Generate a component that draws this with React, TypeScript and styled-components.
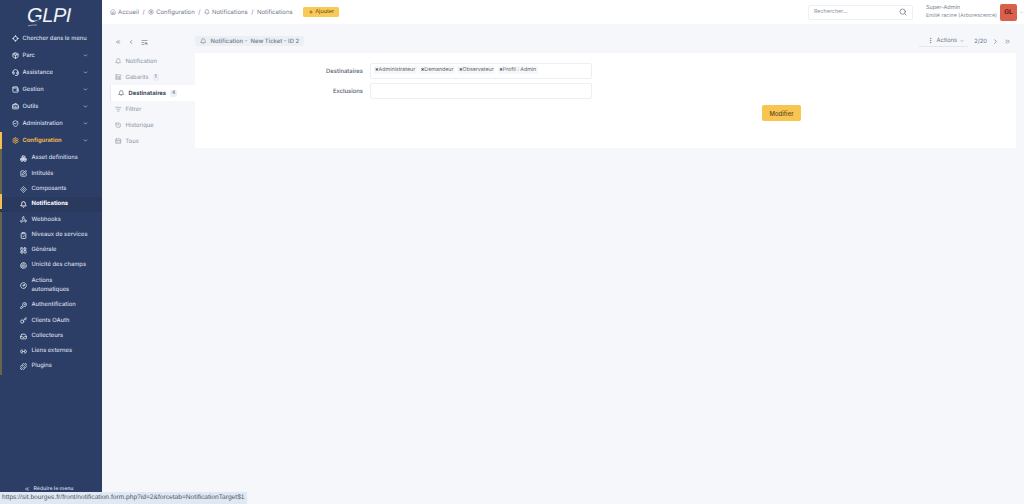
import React from "react";
import styled, { createGlobalStyle } from "styled-components";
import {
  Search, Package, Headset, Wallet, BriefcaseBusiness, ShieldCheck, Settings, ChevronDown,
  ChevronRight, ChevronLeft, ChevronsLeft, ChevronsRight, Bell, LayoutTemplate, ListFilter,
  History, Rows3, House, Plus, EllipsisVertical, Boxes, SquarePen, Component, Webhook,
  ClipboardCheck, LayoutDashboard, Fingerprint, CircleGauge, KeyRound, Key, Inbox, Link2, Puzzle, TextSearch, Locate,
} from "lucide-react";

const GlobalStyle = createGlobalStyle`
  html, body { margin: 0; padding: 0; background: #f5f7fb; }
  body { font-family: Inter, "Liberation Sans", sans-serif; text-rendering: geometricPrecision; }
`;

const Page = styled.div`
  position: relative;
  display: flex;
  width: 1024px;
  height: 504px;
  overflow: hidden;
`;

const Sidebar = styled.aside`
  display: flex;
  flex-direction: column;
  width: 102px;
  flex: none;
  background: #2c3e66;
  color: #d9dfea;
`;

const Logo = styled.div`
  position: relative;
  display: flex;
  align-items: center;
  height: 30px;
  padding: 3px 0 0 27px;
  color: #f1f4f8;
  font-family: "Liberation Sans", sans-serif;
  font-size: 20px;
  font-style: italic;
  letter-spacing: -0.4px;
  box-sizing: border-box;
`;

const LogoSwoosh = styled.svg`
  position: absolute;
  left: 27px;
  top: 17px;
  width: 16px;
  height: 10px;
`;

const Menu = styled.nav`
  display: flex;
  flex-direction: column;
  flex: 1;
`;

const TopItem = styled.div<{ $active?: boolean }>`
  position: relative;
  display: flex;
  align-items: center;
  height: 17px;
  padding: 0 14px 0 12px;
  gap: 3.5px;
  font-size: 5.8px;
  font-weight: ${(p) => (p.$active ? 700 : 500)};
  color: ${(p) => (p.$active ? "#f0b34e" : "#d9dfea")};
  box-sizing: border-box;
  ${(p) =>
    p.$active &&
    `&::before {
      content: "";
      position: absolute;
      left: 0;
      top: 0;
      bottom: 0;
      width: 1.5px;
      background: #f5c04f;
    }`}
`;

const TopLabel = styled.span`
  flex: 1;
  white-space: nowrap;
`;

const SubMenu = styled.div`
  position: relative;
  display: flex;
  flex-direction: column;
  padding-top: 2px;
  &::before {
    content: "";
    position: absolute;
    left: 0;
    top: 0;
    bottom: -1px;
    width: 1.5px;
    background: #66654f;
  }
`;

const SubItem = styled.div<{ $active?: boolean; $tall?: boolean }>`
  position: relative;
  display: flex;
  align-items: center;
  gap: 4.5px;
  min-height: ${(p) => (p.$tall ? "24.5px" : "15.3px")};
  padding-left: 20px;
  font-size: 5.8px;
  line-height: 8.5px;
  font-weight: ${(p) => (p.$active ? 700 : 500)};
  color: ${(p) => (p.$active ? "#ffffff" : "#d5dbe7")};
  background: ${(p) => (p.$active ? "#2a3a5f" : "transparent")};
  ${(p) =>
    p.$active &&
    `&::before {
      content: "";
      position: absolute;
      left: 0;
      top: -3px;
      bottom: 3px;
      width: 1.5px;
      background: #f5c04f;
    }`}
`;

const SubLabel = styled.span`
  max-width: 62px;
`;

const Collapse = styled.div`
  display: flex;
  justify-content: center;
  align-items: center;
  gap: 4px;
  height: 12px;
  margin-bottom: 9px;
  padding-right: 5px;
  font-size: 5.2px;
  font-weight: 500;
`;

const Main = styled.div`
  display: flex;
  flex-direction: column;
  flex: 1;
  min-width: 0;
`;

const Header = styled.header`
  display: flex;
  align-items: center;
  height: 24px;
  padding: 0 0 0 8px;
  background: #ffffff;
  box-sizing: border-box;
`;

const Breadcrumb = styled.div`
  display: flex;
  align-items: center;
  gap: 3.5px;
  font-size: 6px;
  color: #6f7a8c;
`;

const Crumb = styled.span`
  display: flex;
  align-items: center;
  gap: 2px;
`;

const AddButton = styled.div`
  display: flex;
  align-items: center;
  gap: 2.5px;
  height: 9.5px;
  margin-left: 10px;
  padding: 0 5px 0 6px;
  border-radius: 1.5px;
  background: #f8c957;
  font-size: 5.6px;
  color: #5f4a1c;
`;

const SearchBox = styled.div`
  display: flex;
  align-items: center;
  justify-content: space-between;
  width: 105px;
  height: 15px;
  margin-left: auto;
  padding: 0 5px;
  border: 1px solid #edf0f4;
  border-radius: 2px;
  box-sizing: border-box;
  font-size: 5.4px;
  color: #8a93a2;
`;

const UserInfo = styled.div`
  display: flex;
  flex-direction: column;
  gap: 1.5px;
  margin-left: 13px;
  font-size: 5.25px;
  color: #7d8796;
  white-space: nowrap;
`;

const UserName = styled.span`
  font-size: 5.5px;
`;

const Avatar = styled.div`
  display: flex;
  align-items: center;
  justify-content: center;
  width: 17px;
  height: 17px;
  margin-left: 3px;
  border-radius: 2px;
  background: #d9604c;
  color: #5b1f17;
  font-size: 6.5px;
  font-weight: 700;
`;

const Caret = styled.div`
  display: flex;
  width: 5px;
  margin-left: 2px;
  color: #8a93a2;
`;

const Body = styled.div`
  display: flex;
  flex: 1;
`;

const TabsColumn = styled.div`
  display: flex;
  flex-direction: column;
  width: 93px;
  flex: none;
  padding-top: 11px;
`;

const TabTools = styled.div`
  display: flex;
  align-items: center;
  gap: 7px;
  height: 14px;
  margin-bottom: 4px;
  padding-left: 13px;
  color: #5f6b7d;
`;

const Tab = styled.div<{ $active?: boolean }>`
  display: flex;
  align-items: center;
  gap: 4px;
  height: 16px;
  padding-left: ${(p) => (p.$active ? "7px" : "5px")};
  margin-left: 8px;
  font-size: 5.8px;
  font-weight: ${(p) => (p.$active ? 700 : 400)};
  color: ${(p) => (p.$active ? "#3f4a5c" : "#8a93a2")};
  background: ${(p) => (p.$active ? "#ffffff" : "transparent")};
  border-left: ${(p) => (p.$active ? "1px solid #e6e9ef" : "0")};
`;

const Count = styled.span`
  padding: 0.5px 2px;
  border-radius: 1.5px;
  background: #eceff3;
  color: #6f7a8c;
  font-size: 5px;
  font-weight: 500;
`;

const Content = styled.div`
  display: flex;
  flex-direction: column;
  flex: 1;
  min-width: 0;
  padding-right: 8px;
`;

const TitleBar = styled.div`
  display: flex;
  align-items: center;
  height: 29px;
  padding-top: 5px;
  box-sizing: border-box;
`;

const TitleChip = styled.div`
  display: flex;
  align-items: center;
  gap: 4px;
  height: 10px;
  padding: 0 5px;
  background: #eceff4;
  border-radius: 2px;
  font-size: 5.9px;
  font-weight: 500;
  color: #6f7a8c;
  white-space: pre;
`;

const TitleTools = styled.div`
  display: flex;
  align-items: center;
  margin-left: auto;
  font-size: 5.8px;
  color: #6f7a8c;
`;

const ActionsButton = styled.div`
  display: flex;
  align-items: center;
  gap: 3px;
  height: 11px;
  padding: 0 4px 0 8px;
  margin-right: 6px;
  border-bottom: 1px solid #e4e7ec;
`;

const Pager = styled.div`
  display: flex;
  align-items: center;
  gap: 5px;
  padding-right: 5px;
`;

const Card = styled.section`
  display: flex;
  flex-direction: column;
  height: 95px;
  padding: 10px 0 0;
  background: #ffffff;
  box-sizing: border-box;
`;

const FormRow = styled.div`
  display: grid;
  grid-template-columns: 168px 222px;
  column-gap: 7px;
  align-items: center;
  margin-bottom: 4px;
`;

const FieldLabel = styled.label`
  justify-self: end;
  font-size: 5.9px;
  font-weight: 500;
  color: #56606f;
`;

const Field = styled.div`
  display: flex;
  align-items: center;
  gap: 2.5px;
  height: 16px;
  padding: 0 2.5px;
  border: 1px solid #eceff3;
  border-radius: 2px;
  box-sizing: border-box;
`;

const Chip = styled.span`
  padding: 1px 1.5px;
  margin-bottom: 2px;
  background: #f7f8fa;
  font-size: 5.3px;
  color: #5c6675;
  white-space: nowrap;
  &::before {
    content: "×";
    font-weight: 700;
    color: #2f3744;
  }
`;

const FormActions = styled.div`
  display: flex;
  padding: 2px 0 0 567px;
`;

const SubmitButton = styled.button`
  width: 39px;
  height: 16px;
  padding: 0;
  border: 0;
  border-radius: 2px;
  background: #f9c552;
  color: #5f4a1c;
  font: 500 6px Inter, "Liberation Sans", sans-serif;
`;

const StatusBar = styled.div`
  position: absolute;
  left: 0;
  bottom: 0;
  width: 247px;
  height: 12px;
  padding-left: 2px;
  box-sizing: border-box;
  background: #e0e8f4;
  color: #4e5a6c;
  font-family: "Liberation Sans", sans-serif;
  font-size: 6.65px;
  line-height: 12px;
  white-space: nowrap;
`;

const topItems = [
  { label: "Parc", icon: Package },
  { label: "Assistance", icon: Headset },
  { label: "Gestion", icon: Wallet },
  { label: "Outils", icon: BriefcaseBusiness },
  { label: "Administration", icon: ShieldCheck },
];

const subItems = [
  { label: "Asset definitions", icon: Boxes },
  { label: "Intitulés", icon: SquarePen },
  { label: "Composants", icon: Component },
  { label: "Notifications", icon: Bell, active: true },
  { label: "Webhooks", icon: Webhook },
  { label: "Niveaux de services", icon: ClipboardCheck },
  { label: "Générale", icon: LayoutDashboard },
  { label: "Unicité des champs", icon: Fingerprint },
  { label: "Actions automatiques", icon: CircleGauge, tall: true },
  { label: "Authentification", icon: KeyRound },
  { label: "Clients OAuth", icon: Key },
  { label: "Collecteurs", icon: Inbox },
  { label: "Liens externes", icon: Link2 },
  { label: "Plugins", icon: Puzzle },
];

const tabs = [
  { label: "Notification", icon: Bell },
  { label: "Gabarits", icon: LayoutTemplate, count: 1 },
  { label: "Destinataires", icon: Bell, count: 4, active: true },
  { label: "Filtrer", icon: ListFilter },
  { label: "Historique", icon: History },
  { label: "Tous", icon: Rows3 },
];

export default function App() {
  return (
    <Page>
      <GlobalStyle />
      <Sidebar>
        <Logo>
          GLPI
          <LogoSwoosh viewBox="0 0 16 10">
            <path d="M0 9 C4 6 8 4 14 2 L16 3 C10 5 6 7 0 9Z" fill="#2c3e66" />
            <path d="M1 9 C4 8 7 8 10 8" stroke="#aab4c6" strokeWidth="0.8" fill="none" />
          </LogoSwoosh>
        </Logo>
        <Menu>
          <TopItem>
            <Locate size={7} strokeWidth={3} />
            <TopLabel>Chercher dans le menu</TopLabel>
          </TopItem>
          {topItems.map((item) => (
            <TopItem key={item.label}>
              <item.icon size={7} strokeWidth={3} />
              <TopLabel>{item.label}</TopLabel>
              <ChevronDown size={5} strokeWidth={3} />
            </TopItem>
          ))}
          <TopItem $active>
            <Settings size={7} strokeWidth={3} />
            <TopLabel>Configuration</TopLabel>
            <ChevronDown size={5} strokeWidth={3} color="#d9dfea" />
          </TopItem>
          <SubMenu>
            {subItems.map((item) => (
              <SubItem key={item.label} $active={item.active} $tall={item.tall}>
                <item.icon size={7} strokeWidth={3} style={{ flex: "none" }} />
                <SubLabel>{item.tall ? <>Actions<br />automatiques</> : item.label}</SubLabel>
              </SubItem>
            ))}
          </SubMenu>
        </Menu>
        <Collapse>
          <ChevronsLeft size={6} strokeWidth={3} />
          Réduire le menu
        </Collapse>
      </Sidebar>
      <Main>
        <Header>
          <Breadcrumb>
            <Crumb><House size={6} />Accueil</Crumb>
            /
            <Crumb><Settings size={6} />Configuration</Crumb>
            /
            <Crumb><Bell size={6} />Notifications</Crumb>
            /
            <Crumb>Notifications</Crumb>
          </Breadcrumb>
          <AddButton><Plus size={4} strokeWidth={4} />Ajouter</AddButton>
          <SearchBox>Rechercher...<Search size={8} color="#5f6b7d" /></SearchBox>
          <UserInfo>
            <UserName>Super-Admin</UserName>
            <span>Entité racine (Arborescence)</span>
          </UserInfo>
          <Avatar>GL</Avatar>
          <Caret><ChevronDown size={5} /></Caret>
        </Header>
        <Body>
          <TabsColumn>
            <TabTools>
              <ChevronsLeft size={6} strokeWidth={2.5} />
              <ChevronLeft size={6} strokeWidth={2.5} />
              <TextSearch size={7} />
            </TabTools>
            {tabs.map((tab) => (
              <Tab key={tab.label} $active={tab.active}>
                <tab.icon size={6.5} />
                {tab.label}
                {tab.count ? <Count>{tab.count}</Count> : null}
              </Tab>
            ))}
          </TabsColumn>
          <Content>
            <TitleBar>
              <TitleChip><Bell size={6.5} />{"Notification -  New Ticket - ID 2"}</TitleChip>
              <TitleTools>
                <ActionsButton>
                  <EllipsisVertical size={7} />
                  Actions
                  <ChevronDown size={4} strokeWidth={3} />
                </ActionsButton>
                <Pager>
                  2/20
                  <ChevronRight size={7} strokeWidth={2.5} />
                  <ChevronsRight size={7} strokeWidth={2.5} />
                </Pager>
              </TitleTools>
            </TitleBar>
            <Card>
              <FormRow>
                <FieldLabel>Destinataires</FieldLabel>
                <Field>
                  <Chip>Administrateur</Chip>
                  <Chip>Demandeur</Chip>
                  <Chip>Observateur</Chip>
                  <Chip>Profil : Admin</Chip>
                </Field>
              </FormRow>
              <FormRow>
                <FieldLabel>Exclusions</FieldLabel>
                <Field />
              </FormRow>
              <FormActions>
                <SubmitButton>Modifier</SubmitButton>
              </FormActions>
            </Card>
          </Content>
        </Body>
      </Main>
      <StatusBar>https://sit.bourges.fr/front/notification.form.php?id=2&amp;forcetab=NotificationTarget$1</StatusBar>
    </Page>
  );
}
